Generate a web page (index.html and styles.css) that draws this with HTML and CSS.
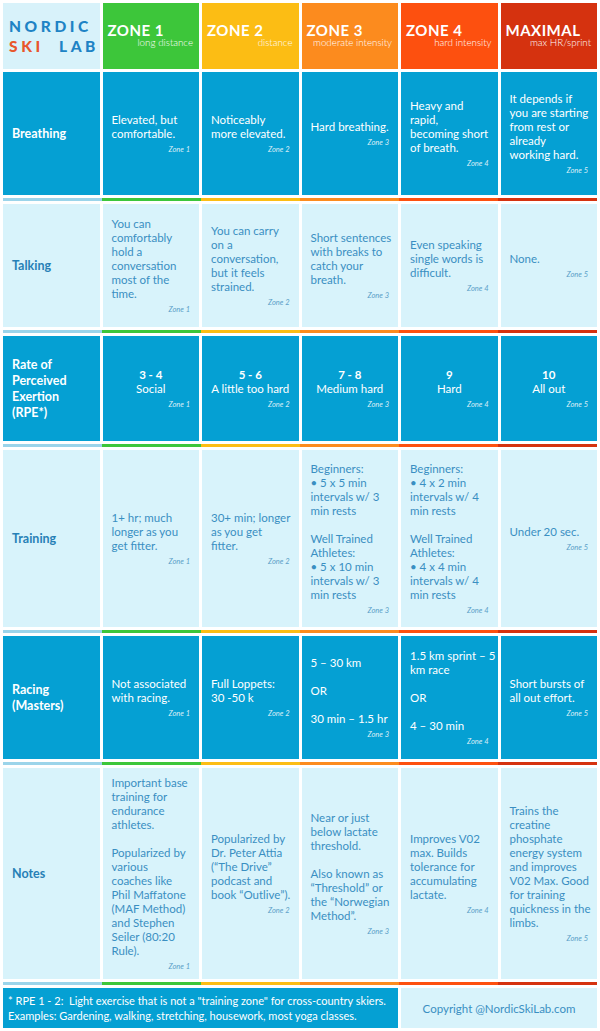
FILE: index.html
```html
<!DOCTYPE html>
<html lang="en">
<head>
<meta charset="utf-8">
<title>Nordic Ski Lab – Training Zones</title>
<link rel="stylesheet" href="styles.css">
</head>
<body>
<div class="chart">
  <div class="logo">
    <div class="l1">NORDIC</div>
    <div class="l2"><span class="ski">SKI</span><span>LAB</span></div>
  </div>
  <div class="zh z1"><span class="zt">ZONE 1</span><span class="zs">long distance</span></div>
  <div class="zh z2"><span class="zt">ZONE 2</span><span class="zs">distance</span></div>
  <div class="zh z3"><span class="zt">ZONE 3</span><span class="zs">moderate intensity</span></div>
  <div class="zh z4"><span class="zt">ZONE 4</span><span class="zs">hard intensity</span></div>
  <div class="zh z5"><span class="zt">MAXIMAL</span><span class="zs">max HR/sprint</span></div>

  <div class="lab dark">Breathing</div>
  <div class="cell dark"><p>Elevated, but<br>comfortable.</p><span class="zn">Zone 1</span></div>
  <div class="cell dark"><p>Noticeably<br>more elevated.</p><span class="zn">Zone 2</span></div>
  <div class="cell dark"><p>Hard breathing.</p><span class="zn">Zone 3</span></div>
  <div class="cell dark"><p>Heavy and<br>rapid,<br>becoming short<br>of breath.</p><span class="zn">Zone 4</span></div>
  <div class="cell dark"><p>It depends if<br>you are starting<br>from rest or<br>already<br>working hard.</p><span class="zn">Zone 5</span></div>
  <div class="bar"><i class="b0"></i><i class="b1"></i><i class="b2"></i><i class="b3"></i><i class="b4"></i><i class="b5"></i></div>

  <div class="lab light">Talking</div>
  <div class="cell light"><p>You can<br>comfortably<br>hold a<br>conversation<br>most of the<br>time.</p><span class="zn">Zone 1</span></div>
  <div class="cell light"><p>You can carry<br>on a<br>conversation,<br>but it feels<br>strained.</p><span class="zn">Zone 2</span></div>
  <div class="cell light"><p>Short sentences<br>with breaks to<br>catch your<br>breath.</p><span class="zn">Zone 3</span></div>
  <div class="cell light"><p>Even speaking<br>single words is<br>difficult.</p><span class="zn">Zone 4</span></div>
  <div class="cell light"><p>None.</p><span class="zn">Zone 5</span></div>
  <div class="bar"><i class="b0"></i><i class="b1"></i><i class="b2"></i><i class="b3"></i><i class="b4"></i><i class="b5"></i></div>

  <div class="lab dark">Rate of<br>Perceived<br>Exertion<br>(RPE*)</div>
  <div class="cell dark rpe"><p><b>3 - 4</b><br>Social</p><span class="zn">Zone 1</span></div>
  <div class="cell dark rpe"><p><b>5 - 6</b><br>A little too hard</p><span class="zn">Zone 2</span></div>
  <div class="cell dark rpe"><p><b>7 - 8</b><br>Medium hard</p><span class="zn">Zone 3</span></div>
  <div class="cell dark rpe"><p><b>9</b><br>Hard</p><span class="zn">Zone 4</span></div>
  <div class="cell dark rpe"><p><b>10</b><br>All out</p><span class="zn">Zone 5</span></div>
  <div class="bar"><i class="b0"></i><i class="b1"></i><i class="b2"></i><i class="b3"></i><i class="b4"></i><i class="b5"></i></div>

  <div class="lab light">Training</div>
  <div class="cell light"><p>1+ hr; much<br>longer as you<br>get fitter.</p><span class="zn">Zone 1</span></div>
  <div class="cell light"><p>30+ min; longer<br>as you get<br>fitter.</p><span class="zn">Zone 2</span></div>
  <div class="cell light"><p>Beginners:<br>• 5 x 5 min<br>intervals w/ 3<br>min rests</p><p>Well Trained<br>Athletes:<br>• 5 x 10 min<br>intervals w/ 3<br>min rests</p><span class="zn">Zone 3</span></div>
  <div class="cell light"><p>Beginners:<br>• 4 x 2 min<br>intervals w/ 4<br>min rests</p><p>Well Trained<br>Athletes:<br>• 4 x 4 min<br>intervals w/ 4<br>min rests</p><span class="zn">Zone 4</span></div>
  <div class="cell light"><p>Under 20 sec.</p><span class="zn">Zone 5</span></div>
  <div class="bar"><i class="b0"></i><i class="b1"></i><i class="b2"></i><i class="b3"></i><i class="b4"></i><i class="b5"></i></div>

  <div class="lab dark">Racing<br>(Masters)</div>
  <div class="cell dark"><p>Not associated<br>with racing.</p><span class="zn">Zone 1</span></div>
  <div class="cell dark"><p>Full Loppets:<br>30 -50 k</p><span class="zn">Zone 2</span></div>
  <div class="cell dark"><p>5 – 30 km</p><p>OR</p><p>30 min – 1.5 hr</p><span class="zn">Zone 3</span></div>
  <div class="cell dark"><p>1.5 km sprint – 5<br>km race</p><p>OR</p><p>4 – 30 min</p><span class="zn">Zone 4</span></div>
  <div class="cell dark"><p>Short bursts of<br>all out effort.</p><span class="zn">Zone 5</span></div>
  <div class="bar"><i class="b0"></i><i class="b1"></i><i class="b2"></i><i class="b3"></i><i class="b4"></i><i class="b5"></i></div>

  <div class="lab light">Notes</div>
  <div class="cell light"><p>Important base<br>training for<br>endurance<br>athletes.</p><p>Popularized by<br>various<br>coaches like<br>Phil Maffatone<br>(MAF Method)<br>and Stephen<br>Seiler (80:20<br>Rule).</p><span class="zn">Zone 1</span></div>
  <div class="cell light"><p>Popularized by<br>Dr. Peter Attia<br>(“The Drive”<br>podcast and<br>book “Outlive”).</p><span class="zn">Zone 2</span></div>
  <div class="cell light"><p>Near or just<br>below lactate<br>threshold.</p><p>Also known as<br>“Threshold” or<br>the “Norwegian<br>Method”.</p><span class="zn">Zone 3</span></div>
  <div class="cell light"><p>Improves V02<br>max. Builds<br>tolerance for<br>accumulating<br>lactate.</p><span class="zn">Zone 4</span></div>
  <div class="cell light"><p>Trains the<br>creatine<br>phosphate<br>energy system<br>and improves<br>V02 Max. Good<br>for training<br>quickness in the<br>limbs.</p><span class="zn">Zone 5</span></div>
  <div class="bar"><i class="b0"></i><i class="b1"></i><i class="b2"></i><i class="b3"></i><i class="b4"></i><i class="b5"></i></div>

  <div class="note">
    <p>* RPE 1 - 2:&nbsp; Light exercise that is not a "training zone" for cross-country skiers.</p>
    <p>Examples: Gardening, walking, stretching, housework, most yoga classes.</p>
  </div>
  <div class="copy">Copyright @NordicSkiLab.com</div>
</div>
</body>
</html>
```
FILE: styles.css
```css
* {
  box-sizing: border-box;
  margin: 0;
  padding: 0;
}

body {
  margin: 0;
  background: #ffffff;
  font-family: Lato, "Open Sans", sans-serif;
}

.chart {
  width: 600px;
  height: 1031px;
  padding: 3px;
  display: grid;
  grid-template-columns: repeat(6, minmax(0, 1fr));
  grid-template-rows: 66px 123px 3px 123px 3px 105px 3px 177px 3px 123px 3px 211px 3px 40px;
  gap: 3px;
}

/* logo */
.logo {
  background: #d8f2fa;
  display: flex;
  flex-direction: column;
  justify-content: center;
  padding: 0 0 0 6px;
  font-weight: 900;
  font-size: 15.5px;
  line-height: 20px;
  letter-spacing: 3.6px;
  color: #1e83c5;
}

.logo .l2 {
  display: flex;
  justify-content: space-between;
  width: 90px;
}

.logo .ski {
  color: #e8572c;
}

/* zone headers */
.zh {
  color: #ffffff;
  display: flex;
  flex-direction: column;
  justify-content: center;
  padding: 0 6px 1px 5px;
}

.zt {
  font-weight: 700;
  font-size: 15px;
  letter-spacing: 0.5px;
  line-height: 13px;
}

.zs {
  font-weight: 300;
  font-size: 9.8px;
  line-height: 9px;
  text-align: right;
  margin-top: 1px;
}

.z1 { background: #3dc63a; }
.z2 { background: #fcbd14; }
.z3 { background: #fc8b1e; }
.z4 { background: #fd500f; }
.z5 { background: #d5320f; }

/* row labels */
.lab {
  display: flex;
  align-items: center;
  padding-left: 9px;
  font-weight: 700;
  font-size: 12.5px;
  line-height: 16px;
}

/* cells */
.cell {
  display: flex;
  flex-direction: column;
  justify-content: center;
  padding: 0 9px;
  font-size: 11.5px;
  line-height: 14px;
  white-space: nowrap;
}

.cell p + p {
  margin-top: 14px;
}

.zn {
  font-style: italic;
  font-size: 7.5px;
  line-height: 11px;
  text-align: right;
  margin-top: 3px;
}

.rpe p {
  text-align: center;
}

.rpe b {
  font-weight: 700;
}

.dark {
  background: #05a0d3;
  color: #ffffff;
}

.dark .zn {
  color: rgba(255, 255, 255, 0.85);
}

.light {
  background: #d8f3fb;
  color: #3a8fc2;
}

.lab.light {
  color: #2780b6;
}

.light .zn {
  color: #5c9fc8;
}

/* colour bars */
.bar {
  grid-column: 1 / -1;
  display: flex;
}

.bar i {
  flex: 1;
}

.b0 { background: #9bd4ea; }
.b1 { background: #3dc63a; }
.b2 { background: #fcbd14; }
.b3 { background: #fc8b1e; }
.b4 { background: #fd500f; }
.b5 { background: #d5320f; }

/* footer */
.note {
  grid-column: span 4;
  background: #05a0d3;
  color: #ffffff;
  font-size: 11px;
  line-height: 15px;
  padding: 0 5px;
  display: flex;
  flex-direction: column;
  justify-content: center;
  white-space: nowrap;
}

.copy {
  grid-column: span 2;
  background: #d8f3fb;
  color: #3a8fc2;
  font-size: 11.5px;
  display: flex;
  align-items: center;
  justify-content: center;
}
```
